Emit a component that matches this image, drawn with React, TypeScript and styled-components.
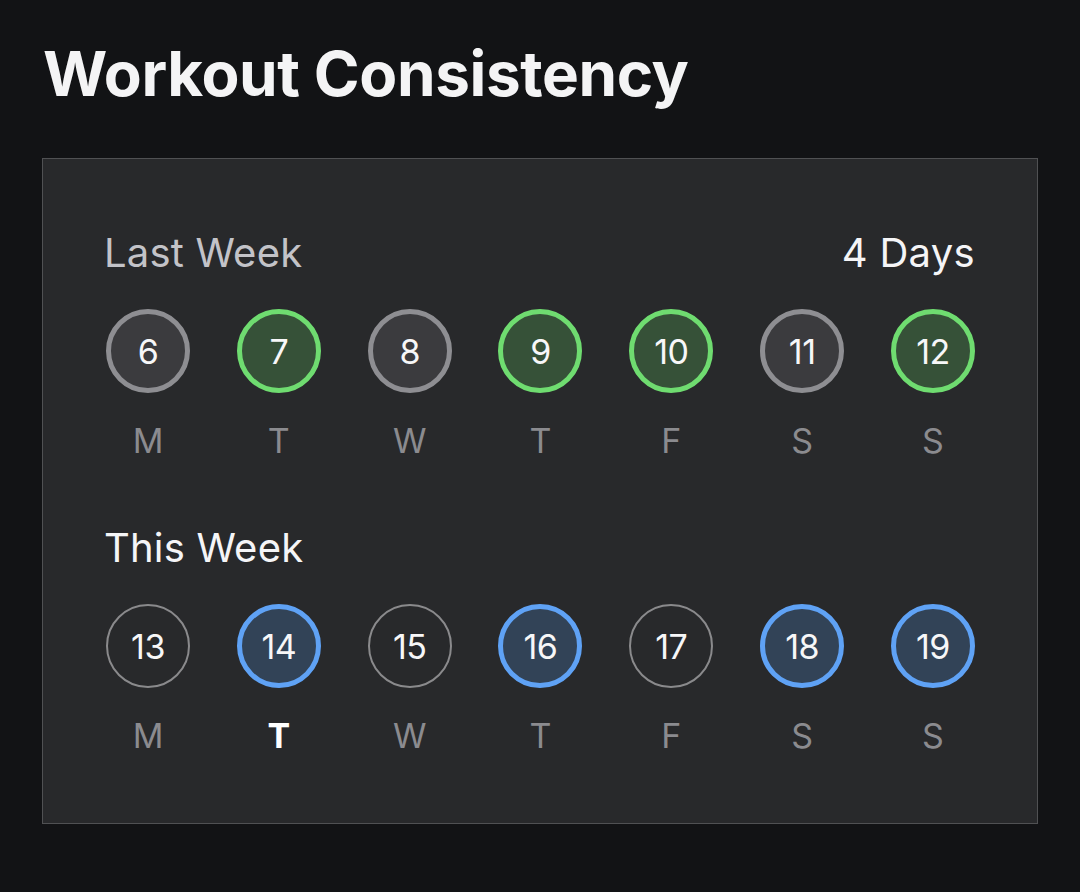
import React from "react";
import styled, { createGlobalStyle } from "styled-components";

const Global = createGlobalStyle`
  html, body { margin: 0; padding: 0; background: #121315; }
  body { font-family: Inter, "Noto Sans", "Liberation Sans", sans-serif; }
`;

const Page = styled.div`
  padding: 34px 42px 40px 42px;
  min-height: 892px;
  box-sizing: border-box;
  background: #121315;
`;

const Title = styled.h1`
  margin: 0 0 0 1px;
  font-size: 62px;
  line-height: 80px;
  font-weight: 700;
  color: #f4f4f5;
  letter-spacing: -0.4px;
`;

const Card = styled.div`
  margin-top: 44px;
  width: 996px;
  box-sizing: border-box;
  background: #28292b;
  border: 1px solid #505153;
  padding: 70px 62px 67px 63px;
  display: flex;
  flex-direction: column;
  gap: 63px;
`;

const Section = styled.section`
  display: flex;
  flex-direction: column;
`;

const Header = styled.div`
  display: flex;
  justify-content: space-between;
  align-items: center;
  height: 48px;
  margin-bottom: 32px;
`;

const Heading = styled.div<{ $muted?: boolean }>`
  margin-left: -2px;
  font-size: 40px;
  line-height: 48px;
  letter-spacing: 0.2px;
  color: ${(p) => (p.$muted ? "#c3c3c8" : "#f5f5f7")};
`;

const Total = styled.div`
  font-size: 40px;
  line-height: 48px;
  letter-spacing: 0.3px;
  color: #f5f5f7;
`;

const Grid = styled.div`
  display: flex;
  justify-content: space-between;
`;

const Col = styled.div`
  width: 84px;
  display: flex;
  flex-direction: column;
  align-items: center;
  gap: 28px;
`;

type Kind = "missed" | "done" | "planned" | "open";

const ring: Record<Kind, string> = {
  missed: "5px solid #8e8e92",
  done: "5px solid #6fdc70",
  planned: "5px solid #5fa2f5",
  open: "2px solid #8a8a8c",
};
const fill: Record<Kind, string> = {
  missed: "#3b3b3e",
  done: "#365138",
  planned: "#324357",
  open: "transparent",
};

const Circle = styled.div<{ $kind: Kind }>`
  width: 84px;
  height: 84px;
  box-sizing: border-box;
  border-radius: 50%;
  border: ${(p) => ring[p.$kind]};
  background: ${(p) => fill[p.$kind]};
  display: flex;
  align-items: center;
  justify-content: center;
  font-size: 34px;
  color: #f7f7f8;
  letter-spacing: -0.5px;
`;

const Day = styled.div<{ $today?: boolean }>`
  font-size: 34px;
  line-height: 40px;
  color: ${(p) => (p.$today ? "#ffffff" : "#8b8b8f")};
  font-weight: ${(p) => (p.$today ? 700 : 400)};
`;

const letters = ["M", "T", "W", "T", "F", "S", "S"];

const lastWeek: { n: number; k: Kind }[] = [
  { n: 6, k: "missed" },
  { n: 7, k: "done" },
  { n: 8, k: "missed" },
  { n: 9, k: "done" },
  { n: 10, k: "done" },
  { n: 11, k: "missed" },
  { n: 12, k: "done" },
];

const thisWeek: { n: number; k: Kind }[] = [
  { n: 13, k: "open" },
  { n: 14, k: "planned" },
  { n: 15, k: "open" },
  { n: 16, k: "planned" },
  { n: 17, k: "open" },
  { n: 18, k: "planned" },
  { n: 19, k: "planned" },
];

function Week({
  days,
  today,
}: {
  days: { n: number; k: Kind }[];
  today?: number;
}) {
  return (
    <Grid>
      {days.map((d, i) => (
        <Col key={d.n}>
          <Circle $kind={d.k}>{d.n}</Circle>
          <Day $today={today === i}>{letters[i]}</Day>
        </Col>
      ))}
    </Grid>
  );
}

export default function App() {
  return (
    <>
      <Global />
      <Page>
        <Title>Workout Consistency</Title>
        <Card>
          <Section>
            <Header>
              <Heading $muted>Last Week</Heading>
              <Total>4 Days</Total>
            </Header>
            <Week days={lastWeek} />
          </Section>
          <Section>
            <Header>
              <Heading>This Week</Heading>
            </Header>
            <Week days={thisWeek} today={1} />
          </Section>
        </Card>
      </Page>
    </>
  );
}
